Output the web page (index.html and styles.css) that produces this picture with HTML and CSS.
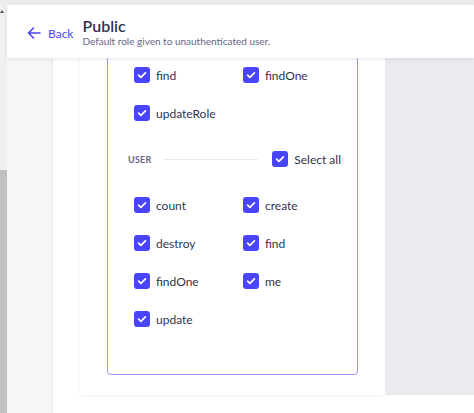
FILE: index.html
```html
<!DOCTYPE html>
<html>
<head>
<meta charset="utf-8">
<link rel="stylesheet" href="styles.css">
</head>
<body>
<div class="topstrip"></div>
<div class="frame">
  <div class="scrollbar">
    <div class="caret"></div>
    <div class="thumb"></div>
  </div>
  <div class="app">
    <header class="header">
      <a class="back">
        <svg width="14" height="12" viewBox="0 0 14 12"><path d="M13 6H1.5M6.5 1L1.5 6l5 5" fill="none" stroke="#4945ff" stroke-width="1.6" stroke-linecap="round" stroke-linejoin="round"/></svg>
        <span>Back</span>
      </a>
      <div class="titles">
        <h1>Public</h1>
        <p>Default role given to unauthenticated user.</p>
      </div>
    </header>
    <div class="body">
      <nav class="leftnav"></nav>
      <main class="main">
        <div class="row">
          <div class="card">
            <div class="box">
              <div class="grid">
                <label class="cb"><span class="tick"><svg viewBox="0 0 16 16"><path d="M4.6 8.2l2.3 2.2 4.5-4.6" /></svg></span>find</label>
                <label class="cb"><span class="tick"><svg viewBox="0 0 16 16"><path d="M4.6 8.2l2.3 2.2 4.5-4.6" /></svg></span>findOne</label>
                <label class="cb"><span class="tick"><svg viewBox="0 0 16 16"><path d="M4.6 8.2l2.3 2.2 4.5-4.6" /></svg></span>updateRole</label>
              </div>
              <div class="section">
                <span class="sect-name">USER</span>
                <span class="line"></span>
                <label class="cb"><span class="tick"><svg viewBox="0 0 16 16"><path d="M4.6 8.2l2.3 2.2 4.5-4.6" /></svg></span>Select all</label>
              </div>
              <div class="grid second">
                <label class="cb"><span class="tick"><svg viewBox="0 0 16 16"><path d="M4.6 8.2l2.3 2.2 4.5-4.6" /></svg></span>count</label>
                <label class="cb"><span class="tick"><svg viewBox="0 0 16 16"><path d="M4.6 8.2l2.3 2.2 4.5-4.6" /></svg></span>create</label>
                <label class="cb"><span class="tick"><svg viewBox="0 0 16 16"><path d="M4.6 8.2l2.3 2.2 4.5-4.6" /></svg></span>destroy</label>
                <label class="cb"><span class="tick"><svg viewBox="0 0 16 16"><path d="M4.6 8.2l2.3 2.2 4.5-4.6" /></svg></span>find</label>
                <label class="cb"><span class="tick"><svg viewBox="0 0 16 16"><path d="M4.6 8.2l2.3 2.2 4.5-4.6" /></svg></span>findOne</label>
                <label class="cb"><span class="tick"><svg viewBox="0 0 16 16"><path d="M4.6 8.2l2.3 2.2 4.5-4.6" /></svg></span>me</label>
                <label class="cb"><span class="tick"><svg viewBox="0 0 16 16"><path d="M4.6 8.2l2.3 2.2 4.5-4.6" /></svg></span>update</label>
              </div>
            </div>
          </div>
          <div class="side"></div>
        </div>
      </main>
    </div>
  </div>
</div>
</body>
</html>
```
FILE: styles.css
```css
* { box-sizing: border-box; }
html, body { margin: 0; padding: 0; }
body {
  width: 474px;
  height: 413px;
  overflow: hidden;
  background: #ffffff;
  font-family: Lato, "Noto Sans", sans-serif;
  color: #32324d;
}
.topstrip { height: 5px; background: #ececec; }
.frame { display: flex; height: 408px; }
.scrollbar {
  width: 7px;
  background: #f0f0f0;
  display: flex;
  flex-direction: column;
  align-items: center;
}
.caret {
  margin-top: 5px;
  width: 0; height: 0;
  border-left: 2px solid transparent;
  border-right: 2px solid transparent;
  border-bottom: 3px solid #505050;
  margin-left: -3px;
}
.thumb {
  margin-top: 157px;
  width: 7px;
  flex: 1;
  background: #c1c1c1;
}
.app { flex: 1; display: flex; flex-direction: column; position: relative; }
.header {
  position: relative;
  z-index: 2;
  height: 53px;
  background: #ffffff;
  box-shadow: 0 1px 4px rgba(33, 33, 52, 0.1);
  display: flex;
  align-items: center;
  padding-left: 20px;
  padding-top: 1px;
}
.back {
  display: flex;
  align-items: center;
  gap: 7px;
  color: #4945ff;
  font-size: 12px;
  margin-right: 9px;
  margin-top: 2px;
}
.titles h1 {
  margin: 0;
  font-size: 16px;
  font-weight: 600;
  line-height: 19px;
  color: #32324d;
}
.titles p {
  margin: 0;
  font-size: 10px;
  line-height: 13px;
  color: #666687;
}
.body { flex: 1; display: flex; overflow: hidden; }
.leftnav {
  width: 46px;
  background: #f6f6f9;
  border-right: 1px solid #eaeaef;
}
.main { flex: 1; background: #ffffff; overflow: hidden; }
.row { display: flex; height: 337px; padding-left: 27px; }
.card {
  width: 305px;
  margin-top: -18px;
  height: 355px;
  background: #ffffff;
  box-shadow: 0 1px 3px rgba(33, 33, 52, 0.08);
  border-radius: 0 0 4px 4px;
  padding: 0 27px 21px;
}
.side { flex: 1; background: #eaeaef; }
.box {
  height: 335px;
  border: 1px solid #9d99f2;
  border-radius: 4px;
  padding: 15px 0 0 26px;
}
.grid {
  display: grid;
  grid-template-columns: 109px 109px;
  grid-auto-rows: 38px;
}
.cb {
  display: flex;
  align-items: center;
  gap: 6px;
  font-size: 12px;
  color: #32324d;
}
.tick {
  width: 16px; height: 16px;
  border-radius: 3px;
  background: #4945ff;
  display: inline-flex;
}
.tick svg { width: 16px; height: 16px; }
.tick path { fill: none; stroke: #ffffff; stroke-width: 1.7; stroke-linecap: round; stroke-linejoin: round; }
.section {
  display: flex;
  align-items: center;
  height: 38px;
  margin: 8px 0 8px -6px;
  padding-right: 16px;
}
.sect-name {
  font-size: 9px;
  font-weight: 700;
  color: #666687;
  letter-spacing: 0.2px;
}
.line {
  flex: 1;
  height: 1px;
  background: #eaeaef;
  margin: 0 14px 0 12px;
}
```
